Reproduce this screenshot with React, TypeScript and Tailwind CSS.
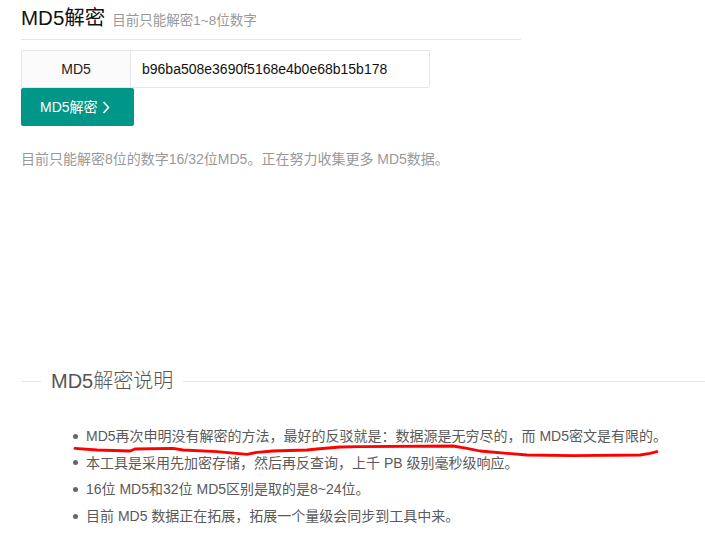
import React from "react";

const items = [
  "MD5再次申明没有解密的方法，最好的反驳就是：数据源是无穷尽的，而 MD5密文是有限的。",
  "本工具是采用先加密存储，然后再反查询，上千 PB 级别毫秒级响应。",
  "16位 MD5和32位 MD5区别是取的是8~24位。",
  "目前 MD5 数据正在拓展，拓展一个量级会同步到工具中来。",
];

const redPts =
  "75,448.3 97,450 130,451 135,449 173,448.3 183,450 217,451.7 247,454.3 257,452.3 273,451 307,450 317,449 340,447 360,446.7 453,446 467,448.3 480,451 507,453.3 527,455 573,455.7 640,455 650,453.3 657,451.7";

export default function App() {
  return (
    <div className="relative w-[705px] h-[542px] overflow-hidden bg-white pl-[21px] font-['Liberation_Sans','Noto_Sans_CJK_SC',sans-serif]">
      <div className="w-[500px]">
        <div className="h-[40px] border-b border-[#e6e6e6] pt-[3px] flex items-baseline">
          <span className="text-[20.5px] leading-[30px] text-[#111]">MD5解密</span>
          <span className="ml-[7px] text-[13.5px] leading-[30px] text-[#999]">目前只能解密1~8位数字</span>
        </div>
        <div className="mt-[10px] flex w-[409px] h-[38px]">
          <div className="w-[110px] h-full border border-[#e6e6e6] bg-[#fbfbfb] rounded-l-[2px] flex items-center justify-center text-[14px] text-[#222]">
            MD5
          </div>
          <input
            readOnly
            value="b96ba508e3690f5168e4b0e68b15b178"
            className="flex-1 h-full border border-l-0 border-[#e6e6e6] rounded-r-[2px] pl-[11px] text-[14px] text-[#111] outline-none font-['Liberation_Sans','Noto_Sans_CJK_SC',sans-serif]"
          />
        </div>
        <div className="w-[113px] h-[38px] bg-[#009688] rounded-[2px] flex items-center pl-[19px] text-[14px] text-white">
          <span>MD5解密</span>
          <svg width="8" height="13" viewBox="0 0 8 13" className="ml-[4px]" fill="none">
            <path d="M1.5 1 L6.5 6.5 L1.5 12" stroke="white" strokeWidth="1.6" />
          </svg>
        </div>
        <p className="mt-[23px] leading-[20px] text-[14px] text-[#999] whitespace-nowrap">
          目前只能解密8位的数字16/32位MD5。正在努力收集更多 MD5数据。
        </p>
      </div>

      <div className="mt-[197px] h-[30px] flex items-center">
        <div className="w-[20px] h-px bg-[#e6e6e6]" />
        <span className="px-[10px] text-[20px] leading-[30px] text-[#555] font-light">MD5解密说明</span>
        <div className="flex-1 h-px bg-[#e6e6e6]" />
      </div>

      <ul className="mt-[27px] ml-[52px]">
        {items.map((t) => (
          <li key={t} className="flex items-center leading-[26.6px] text-[14px] text-[#5a5a5a] whitespace-nowrap">
            <span className="w-[5px] h-[5px] rounded-full bg-[#666] mr-[8px] shrink-0" />
            <span>{t}</span>
          </li>
        ))}
      </ul>

      <svg className="absolute inset-0 pointer-events-none" width="705" height="542" viewBox="0 0 705 542">
        <polyline points={redPts} fill="none" stroke="#ff0000" strokeWidth="2.8" strokeLinecap="round" strokeLinejoin="round" />
      </svg>
    </div>
  );
}
